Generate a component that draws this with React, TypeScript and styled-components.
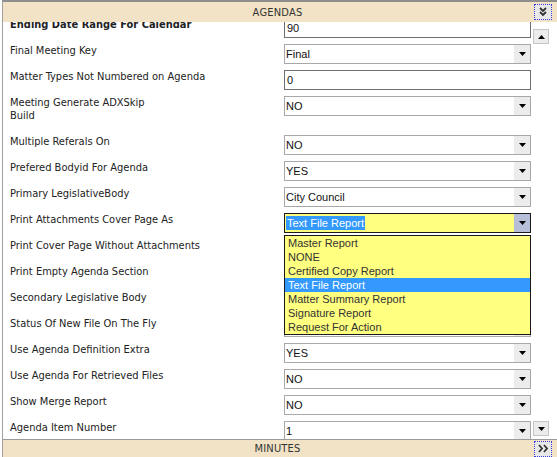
import { useLayoutEffect, useRef } from "react";
import styled, { createGlobalStyle } from "styled-components";

const GlobalStyle = createGlobalStyle`
  html, body {
    margin: 0;
    padding: 0;
    background: #fff;
  }
`;

const Panel = styled.div`
  width: 557px;
  height: 457px;
  box-sizing: border-box;
  padding-left: 2px;
  display: flex;
  flex-direction: column;
  font-family: "DejaVu Sans Condensed", "DejaVu Sans", sans-serif;
  font-stretch: condensed;
  font-size: 11px;
  color: #222;
  overflow: hidden;
`;

const SectionBar = styled.div<{ $top?: boolean }>`
  flex: none;
  box-sizing: border-box;
  height: ${(p) => (p.$top ? "22px" : "18px")};
  background: #f2e3c6;
  border-top: ${(p) => (p.$top ? "2px solid #8e8e8e" : "1px solid #9a9a9a")};
  border-left: 1px solid #a0a0a0;
  display: grid;
  grid-template-columns: 1fr auto 1fr;
  align-items: center;
  padding-right: 5px;
  color: #333;
`;

const BarTitle = styled.div`
  grid-column: 2;
  letter-spacing: 0.2px;
`;

const BarToggle = styled.button`
  grid-column: 3;
  justify-self: end;
  width: 18px;
  height: 16px;
  padding: 0;
  background: #e8e8e8;
  border: 1px dotted #3c3cd8;
  display: flex;
  align-items: center;
  justify-content: center;
`;

const Body = styled.div`
  flex: 1;
  display: flex;
  min-height: 0;
`;

const Scroller = styled.div`
  width: 529px;
  box-sizing: border-box;
  border-left: 1px solid #a0a0a0;
  overflow: hidden;
`;

const Form = styled.div`
  padding-left: 7px;
`;

const Row = styled.div`
  display: grid;
  grid-template-columns: 274px 247px;
  align-items: start;
`;

const Label = styled.div<{ $strong?: boolean }>`
  line-height: 13px;
  padding-bottom: 13px;
  font-weight: ${(p) => (p.$strong ? "bold" : "normal")};
`;

const FieldCell = styled.div`
  position: relative;
`;

const TextBox = styled.input`
  display: block;
  box-sizing: border-box;
  width: 247px;
  height: 20px;
  margin: 0;
  padding: 0 2px;
  border: 1px solid #6e6e6e;
  background: #fff;
  font-family: "Liberation Sans", Arial, sans-serif;
  font-size: 11px;
  color: #111;
  outline: none;
`;

const SelectBox = styled.div<{ $active?: boolean }>`
  box-sizing: border-box;
  width: 247px;
  height: 20px;
  display: flex;
  border: 1px solid ${(p) => (p.$active ? "#1a1a1a" : "#a8a8a8")};
  background: ${(p) => (p.$active ? "#ffff80" : "#fff")};
  font-family: "Liberation Sans", Arial, sans-serif;
  font-size: 11px;
  color: #111;
`;

const SelectValue = styled.div`
  flex: 1;
  display: flex;
  align-items: center;
  padding-left: 1px;
  white-space: nowrap;
  overflow: hidden;
`;

const Highlight = styled.span`
  background: #3399ff;
  color: #fff;
  padding: 1px;
`;

const ArrowCell = styled.div<{ $active?: boolean }>`
  width: 16px;
  display: flex;
  align-items: center;
  justify-content: center;
  background: ${(p) => (p.$active ? "#b7bfd8" : "#ececec")};
`;

const DropList = styled.ul`
  position: absolute;
  top: 22px;
  left: 0;
  width: 247px;
  box-sizing: border-box;
  margin: 0;
  padding: 0;
  list-style: none;
  background: #ffff80;
  border: 1px solid #1a1a1a;
  font-family: "Liberation Sans", Arial, sans-serif;
  font-size: 11px;
  z-index: 2;
`;

const DropItem = styled.li<{ $selected?: boolean }>`
  height: 14px;
  line-height: 14px;
  padding-left: 3px;
  color: ${(p) => (p.$selected ? "#fff" : "#333")};
  background: ${(p) => (p.$selected ? "#3399ff" : "transparent")};
`;

const SideRail = styled.div`
  width: 26px;
  display: flex;
  flex-direction: column;
  justify-content: space-between;
  padding: 7px 0 3px 2px;
  box-sizing: border-box;
`;

const RailButton = styled.button`
  width: 16px;
  height: 15px;
  padding: 0;
  background: #ececec;
  border: 1px solid #c6c6c6;
  display: flex;
  align-items: center;
  justify-content: center;
`;

const Caret = ({ up }: { up?: boolean }) => (
  <svg width="7" height="4" viewBox="0 0 7 4">
    <path d={up ? "M0 4 L3.5 0 L7 4 Z" : "M0 0 L7 0 L3.5 4 Z"} fill="#000" />
  </svg>
);

const DoubleDown = () => (
  <svg width="10" height="10" viewBox="0 0 10 10">
    <path
      d="M2 1 L5 4 L8 1 M2 5 L5 8 L8 5"
      fill="none"
      stroke="#333"
      strokeWidth="1.8"
    />
  </svg>
);

const DoubleRight = () => (
  <svg width="11" height="9" viewBox="0 0 11 9">
    <path
      d="M1 1 L4 4.5 L1 8 M6 1 L9 4.5 L6 8"
      fill="none"
      stroke="#333"
      strokeWidth="1.8"
    />
  </svg>
);

type Field = {
  label: React.ReactNode;
  value: string;
  kind: "text" | "select";
  strong?: boolean;
  open?: string[];
};

const printOptions = [
  "Master Report",
  "NONE",
  "Certified Copy Report",
  "Text File Report",
  "Matter Summary Report",
  "Signature Report",
  "Request For Action",
];

const fields: Field[] = [
  { label: "Display Agenda Item Number", value: "YES", kind: "select" },
  { label: "Ending Date Range For Calendar", value: "90", kind: "text", strong: true },
  { label: "Final Meeting Key", value: "Final", kind: "select" },
  { label: "Matter Types Not Numbered on Agenda", value: "0", kind: "text" },
  {
    label: (
      <>
        Meeting Generate ADXSkip
        <br />
        Build
      </>
    ),
    value: "NO",
    kind: "select",
  },
  { label: "Multiple Referals On", value: "NO", kind: "select" },
  { label: "Prefered Bodyid For Agenda", value: "YES", kind: "select" },
  { label: "Primary LegislativeBody", value: "City Council", kind: "select" },
  {
    label: "Print Attachments Cover Page As",
    value: "Text File Report",
    kind: "select",
    open: printOptions,
  },
  { label: "Print Cover Page Without Attachments", value: "NO", kind: "select" },
  { label: "Print Empty Agenda Section", value: "NO", kind: "select" },
  { label: "Secondary Legislative Body", value: "NONE", kind: "select" },
  { label: "Status Of New File On The Fly", value: "NONE", kind: "select" },
  { label: "Use Agenda Definition Extra", value: "YES", kind: "select" },
  { label: "Use Agenda For Retrieved Files", value: "NO", kind: "select" },
  { label: "Show Merge Report", value: "NO", kind: "select" },
  { label: "Agenda Item Number", value: "1", kind: "select" },
  { label: "Agenda Item Prefix", value: "NONE", kind: "select" },
];

function App() {
  const scrollRef = useRef<HTMLDivElement>(null);
  const anchorRef = useRef<HTMLDivElement>(null);

  // the list is shown scrolled so the bold row sits just under the bar
  useLayoutEffect(() => {
    if (scrollRef.current && anchorRef.current) {
      scrollRef.current.scrollTop = anchorRef.current.offsetTop - scrollRef.current.offsetTop + 4;
    }
  }, []);

  return (
    <>
      <GlobalStyle />
      <Panel>
        <SectionBar $top>
          <BarTitle>AGENDAS</BarTitle>
          <BarToggle>
            <DoubleDown />
          </BarToggle>
        </SectionBar>
        <Body>
          <Scroller ref={scrollRef}>
            <Form>
              {fields.map((f, i) => (
                <Row key={i} ref={f.strong ? anchorRef : undefined}>
                  <Label $strong={f.strong}>{f.label}</Label>
                  <FieldCell>
                    {f.kind === "text" ? (
                      <TextBox defaultValue={f.value} readOnly />
                    ) : (
                      <SelectBox $active={!!f.open}>
                        <SelectValue>
                          {f.open ? <Highlight>{f.value}</Highlight> : f.value}
                        </SelectValue>
                        <ArrowCell $active={!!f.open}>
                          <Caret />
                        </ArrowCell>
                      </SelectBox>
                    )}
                    {f.open && (
                      <DropList>
                        {f.open.map((o) => (
                          <DropItem key={o} $selected={o === f.value}>
                            {o}
                          </DropItem>
                        ))}
                      </DropList>
                    )}
                  </FieldCell>
                </Row>
              ))}
            </Form>
          </Scroller>
          <SideRail>
            <RailButton>
              <Caret up />
            </RailButton>
            <RailButton>
              <Caret />
            </RailButton>
          </SideRail>
        </Body>
        <SectionBar>
          <BarTitle>MINUTES</BarTitle>
          <BarToggle>
            <DoubleRight />
          </BarToggle>
        </SectionBar>
      </Panel>
    </>
  );
}

export default App;
